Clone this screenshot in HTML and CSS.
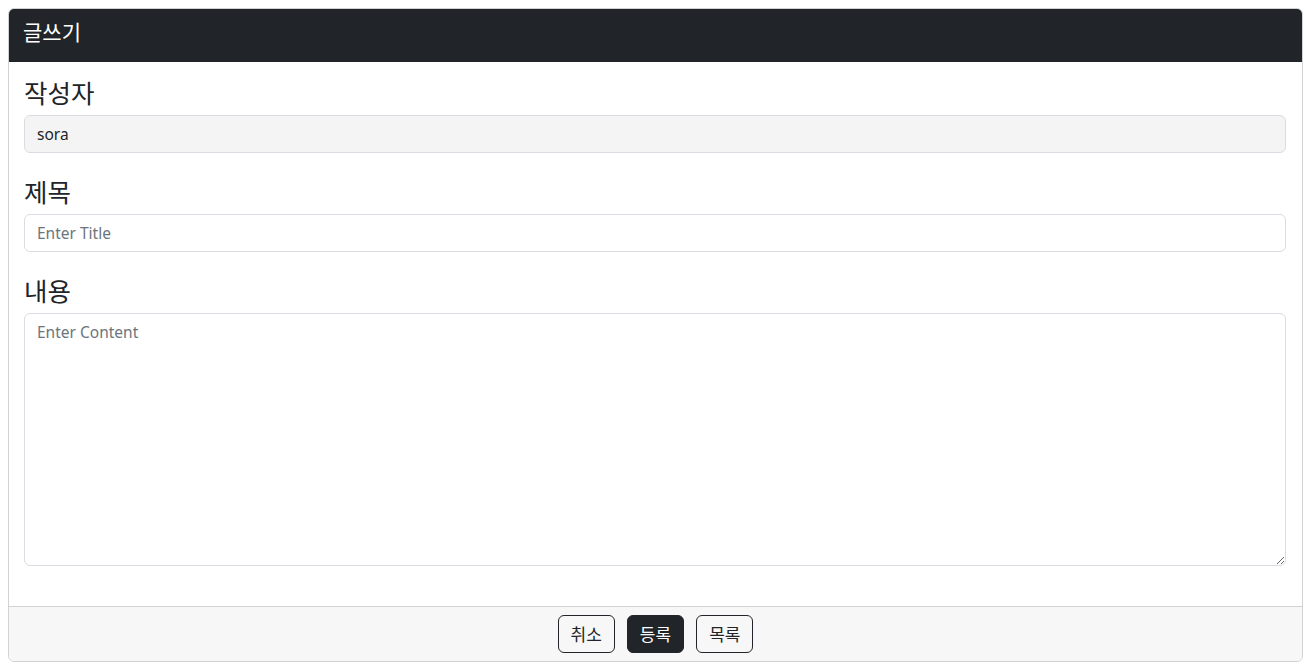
FILE: index.html
```html
<!DOCTYPE html>
<html lang="ko">
<head>
<meta charset="utf-8">
<title>글쓰기</title>
<link rel="stylesheet" href="styles.css">
</head>
<body>
<div class="card">
  <div class="card-header">글쓰기</div>
  <div class="card-body">
    <div class="group">
      <label class="label" for="writer">작성자</label>
      <input class="control control-disabled" id="writer" type="text" value="sora" readonly>
    </div>
    <div class="group">
      <label class="label" for="title">제목</label>
      <input class="control" id="title" type="text" placeholder="Enter Title">
    </div>
    <div class="group">
      <label class="label" for="content">내용</label>
      <textarea class="control textarea" id="content" placeholder="Enter Content"></textarea>
    </div>
  </div>
  <div class="card-footer">
    <button class="btn btn-outline" type="button">취소</button>
    <button class="btn btn-dark" type="button">등록</button>
    <button class="btn btn-outline" type="button">목록</button>
  </div>
</div>
</body>
</html>
```

FILE: styles.css
```css
* { box-sizing: border-box; }
body {
  margin: 8px;
  font-family: "Noto Sans", "Noto Sans CJK KR", sans-serif;
  color: #212529;
  background: #fff;
}
.card {
  border: 1px solid #d2d2d2;
  border-radius: 6px;
  overflow: hidden;
  background: #fff;
}
.card-header {
  background: #212529;
  color: #fff;
  height: 54px;
  padding: 6px 16px 10px 15px;
  font-family: "Noto Sans CJK KR", sans-serif;
  font-size: 21px;
  line-height: 35px;
  margin: -1px -1px 0 -1px;
  border-radius: 5px 5px 0 0;
}
.card-body {
  padding: 16px 16px 16px 15px;
}
.group {
  margin-bottom: 24px;
}
.label {
  display: block;
  font-size: 25.5px;
  line-height: 28px;
  margin-bottom: 9px;
  font-family: "Noto Sans CJK KR", sans-serif;
}
.control {
  display: block;
  width: 100%;
  height: 38px;
  padding: 6px 12px;
  font-family: "Noto Sans", "Noto Sans CJK KR", sans-serif;
  font-size: 15.5px;
  line-height: 24px;
  color: #212529;
  background: #fff;
  border: 1px solid #d9dce0;
  border-radius: 6px;
  outline: none;
}
.control::placeholder { color: #6c757d; }
.control-disabled { background: #f4f4f5; }
.textarea {
  height: 253px;
  resize: vertical;
}
.card-footer {
  background: #f7f7f7;
  border-top: 1px solid #d2d2d2;
  padding: 8px 16px;
  display: flex;
  justify-content: center;
  gap: 12px;
  height: 55px;
}
.btn {
  height: 38px;
  padding: 6px 12px;
  font-family: "Noto Sans CJK KR", sans-serif;
  font-size: 17px;
  line-height: 24px;
  border-radius: 6px;
  border: 1px solid #212529;
  cursor: pointer;
}
.btn-outline { background: transparent; color: #212529; }
.btn-dark { background: #212529; color: #fff; }
```
